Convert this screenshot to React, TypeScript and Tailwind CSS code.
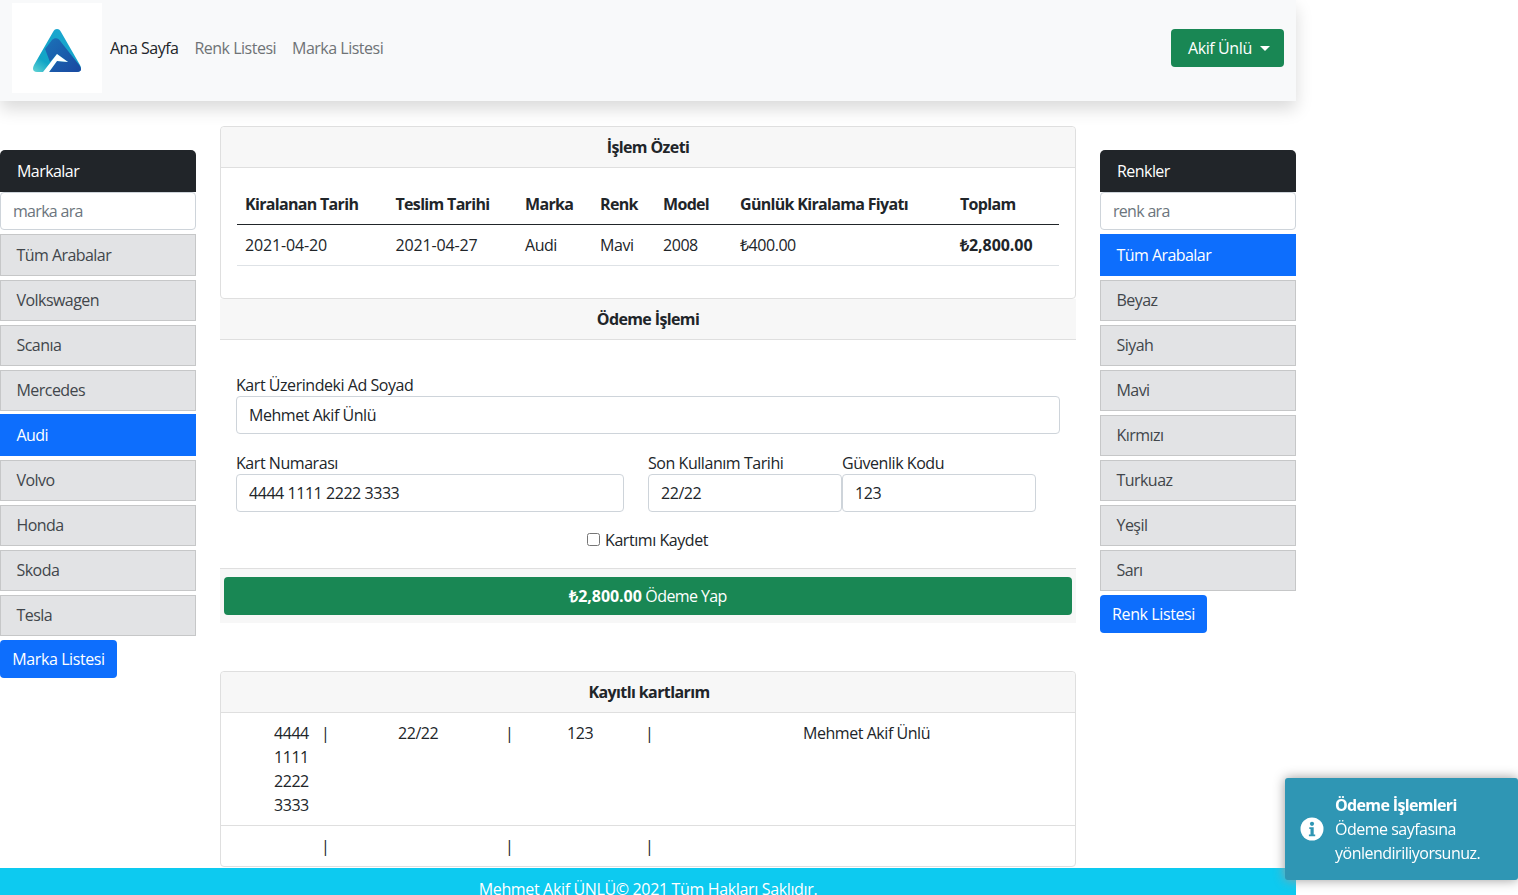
import React from "react";

const brands = ["Tüm Arabalar", "Volkswagen", "Scanıa", "Mercedes", "Audi", "Volvo", "Honda", "Skoda", "Tesla"];
const colors = ["Tüm Arabalar", "Beyaz", "Siyah", "Mavi", "Kırmızı", "Turkuaz", "Yeşil", "Sarı"];

function Side({ title, placeholder, items, active, button, btnW }: { title: string; placeholder: string; items: string[]; active: string; button: string; btnW: string }) {
  return (
    <div className="mt-[49px] tracking-[-0.55px]">
      <div className="h-[42px] bg-[#212529] text-white rounded-t-[5px] pl-[17px] flex items-center">{title}</div>
      <input placeholder={placeholder} readOnly className="block w-full h-[38px] border border-[#ced4da] rounded-[4px] bg-white px-3 outline-none tracking-[-0.7px] placeholder:text-[#6c757d]" />
      <div className="flex flex-col pt-1">
        {items.map((x, i) => (
          <div key={x} className={`pl-[15.5px] flex items-center border ${x === active || i === 0 ? "h-[42px]" : "h-[41px] pb-[2px]"} ${i === 0 ? "" : x === active ? "mt-[3px]" : "mt-1"} ${x === active ? "bg-[#0d6efd] border-[#0d6efd] text-white" : "bg-[#e2e3e5] border-[#c6c7c8] text-[#41464b]"}`}>{x}</div>
        ))}
      </div>
      <button className={`mt-1 h-[38px] ${btnW} rounded-[4px] bg-[#0d6efd] text-white tracking-[-0.4px]`}>{button}</button>
    </div>
  );
}

const thc = "text-left font-bold px-2 h-[40px] border-b border-[#212529] tracking-[-0.68px]";
const tdc = "text-left px-2 h-[41px] border-b border-[#dee2e6]";

function Field({ label, value, cls }: { label: string; value: string; cls: string }) {
  return (
    <div className={cls}>
      <div className="h-6 leading-[26px] text-[#212529]">{label}</div>
      <input readOnly value={value} className="block w-full h-[38px] border border-[#ced4da] rounded-[4px] px-3 text-[#212529] outline-none" />
    </div>
  );
}

function Row({ card, date, cvv, name, h }: { card: string; date: string; cvv: string; name: string; h: string }) {
  return (
    <div className={`flex ${h} py-2 leading-6 text-[#212529]`}>
      <div className="w-[53px]" />
      <div className="w-[38px]">{card}</div>
      <div className="w-[9px]" />
      <div className="w-[77px]">|</div>
      <div className="w-[107px]">{date}</div>
      <div className="w-[62px]">|</div>
      <div className="w-[78px]">{cvv}</div>
      <div className="w-[158px]">|</div>
      <div>{name}</div>
    </div>
  );
}

export default function App() {
  return (
    <div className="relative h-[895px] overflow-hidden bg-white text-base leading-6 text-[#212529] font-['Open_Sans','Liberation_Sans',sans-serif] tracking-[-0.45px]">
      <div className="w-[1296px]">
        <nav className="h-[101px] bg-[#f8f9fa] shadow-[0_8px_16px_rgba(0,0,0,0.15)] flex items-center pl-3 pr-3 relative">
          <div className="w-[90px] h-[90px] bg-white flex items-center justify-center mt-[-6px]">
            <svg width="48" height="43" viewBox="0 0 48 43" className="mt-[6px] ml-[-1px]">
              <defs>
                <linearGradient id="g1" x1="0" y1="1" x2="0.7" y2="0.1">
                  <stop offset="0" stopColor="#62d4d4" />
                  <stop offset="0.3" stopColor="#12a5c6" />
                  <stop offset="1" stopColor="#1aa6cf" />
                </linearGradient>
                <linearGradient id="g2" x1="0" y1="0" x2="1" y2="1">
                  <stop offset="0" stopColor="#1b72b8" />
                  <stop offset="1" stopColor="#1a48a0" />
                </linearGradient>
              </defs>
              <path d="M24 0 C22 0 21 1 20 3 L1 36 C-1 40 0 43 4 43 L44 43 C48 43 49 40 47 36 L28 3 C27 1 26 0 24 0 Z" fill="url(#g1)" />
              <path d="M12 20 L19 11 C22 8 26 9 28 13 L47 37 C49 41 48 43 44 43 L16 43 L24 32 L35 33 L24 25 L17 33 Z" fill="url(#g2)" />
              <path d="M24 25 L10 43 L16 43 L24 32 L35 33 Z" fill="#fff" />
            </svg>
          </div>
          <div className="flex ml-2 gap-4 mt-[-5px] tracking-[-0.5px]">
            <span className="text-[#212529]">Ana Sayfa</span>
            <span className="text-[#6f7376]">Renk Listesi</span>
            <span className="text-[#6f7376]">Marka Listesi</span>
          </div>
          <button className="ml-auto h-[38px] w-[113px] mt-[-5px] rounded-[4px] bg-[#198754] text-white flex items-center justify-start pl-[17px] gap-2 tracking-[-0.4px]">
            Akif Ünlü
            <span className="w-0 h-0 border-x-[5px] border-x-transparent border-t-[5px] border-t-white" />
          </button>
        </nav>
        <div className="grid grid-cols-[196px_856px_196px] gap-x-6">
          <Side title="Markalar" placeholder="marka ara" items={brands} active="Audi" button="Marka Listesi" btnW="w-[117px]" />
          <div className="mt-[25px]">
            <div className="border border-[#dfdfdf] rounded-[4px] h-[173px]">
              <div className="h-[41px] bg-[#f7f7f7] border-b border-[#dfdfdf] rounded-t-[4px] flex items-center justify-center font-bold tracking-[-0.62px]">İşlem Özeti</div>
              <div className="px-4 pt-4">
                <table className="w-full table-fixed border-collapse">
                  <colgroup>
                    <col className="w-[150.5px]" /><col className="w-[129.5px]" /><col className="w-[75px]" /><col className="w-[63px]" /><col className="w-[77px]" /><col className="w-[220px]" /><col />
                  </colgroup>
                  <thead>
                    <tr>
                      {["Kiralanan Tarih", "Teslim Tarihi", "Marka", "Renk", "Model", "Günlük Kiralama Fiyatı", "Toplam"].map((x) => (
                        <th key={x} className={thc}>{x}</th>
                      ))}
                    </tr>
                  </thead>
                  <tbody>
                    <tr>
                      {["2021-04-20", "2021-04-27"].map((x) => (
                        <td key={x} className={`${tdc} tracking-[-0.15px]`}>{x}</td>
                      ))}
                      {["Audi", "Mavi", "2008", "₺400.00"].map((x) => (
                        <td key={x} className={tdc}>{x}</td>
                      ))}
                      <td className={`${tdc} font-bold tracking-[-0.05px]`}>₺2,800.00</td>
                    </tr>
                  </tbody>
                </table>
              </div>
            </div>
            <div className="h-[41px] bg-[#f7f7f7] border-b border-[#dfdfdf] flex items-center justify-center font-bold tracking-[-0.62px]">Ödeme İşlemi</div>
            <div className="px-4 pt-[32px]">
              <Field label="Kart Üzerindeki Ad Soyad" value="Mehmet Akif Ünlü" cls="w-[824px]" />
              <div className="flex mt-[16px]">
                <Field label="Kart Numarası" value="4444 1111 2222 3333" cls="w-[388px]" />
                <Field label="Son Kullanım Tarihi" value="22/22" cls="w-[194px] ml-6" />
                <Field label="Güvenlik Kodu" value="123" cls="w-[194px]" />
              </div>
              <label className="flex items-center justify-center h-6 mt-4 gap-[5px] pr-[1px]">
                <input type="checkbox" className="w-[13px] h-[13px] mb-[2px]" />
                <span>Kartımı Kaydet</span>
              </label>
            </div>
            <div className="mt-4 border-t border-[#dfdfdf] bg-[#f7f7f7] h-[55px] px-1 pt-2">
              <button className="w-full h-[38px] rounded-[4px] bg-[#198754] text-white tracking-[-0.6px]"><b className="tracking-[-0.05px]">₺2,800.00</b> Ödeme Yap</button>
            </div>
            <div className="mt-12 border border-[#dfdfdf] rounded-[4px]">
              <div className="h-[41px] bg-[#f7f7f7] border-b border-[#dfdfdf] rounded-t-[4px] flex items-center justify-center font-bold pl-[2px] tracking-[-0.6px]">Kayıtlı kartlarım</div>
              <Row card="4444 1111 2222 3333" date="22/22" cvv="123" name="Mehmet Akif Ünlü" h="h-[112px]" />
              <div className="border-t border-[#dfdfdf]">
                <Row card="" date="" cvv="" name="" h="h-[40px]" />
              </div>
            </div>
          </div>
          <Side title="Renkler" placeholder="renk ara" items={colors} active="Tüm Arabalar" button="Renk Listesi" btnW="w-[107px]" />
        </div>
        <div className="mt-px h-10 bg-[#0dcaf0] text-white text-center pt-[9px] tracking-[-0.35px]">Mehmet Akif ÜNLÜ© 2021 Tüm Hakları Saklıdır.</div>
      </div>
      <div className="fixed right-0 top-[778px] w-[233px] h-[102px] rounded-[3px] bg-[#2f96b4] text-white shadow-[0_0_12px_#999] flex items-center pl-[15px]">
        <svg width="24" height="24" viewBox="0 0 24 24" className="shrink-0">
          <circle cx="12" cy="12" r="11.5" fill="#fff" />
          <circle cx="12" cy="6.8" r="2.1" fill="#2f96b4" />
          <path d="M9.3 10.3h4.4v7.2h1.5v1.7H8.9v-1.7h1.6v-5.5H9.3z" fill="#2f96b4" />
        </svg>
        <div className="ml-[11px] text-base leading-6 flex-1 tracking-[-0.5px]">
          <div className="font-bold tracking-[-0.65px]">Ödeme İşlemleri</div>
          <div>Ödeme sayfasına yönlendiriliyorsunuz.</div>
        </div>
      </div>
    </div>
  );
}
